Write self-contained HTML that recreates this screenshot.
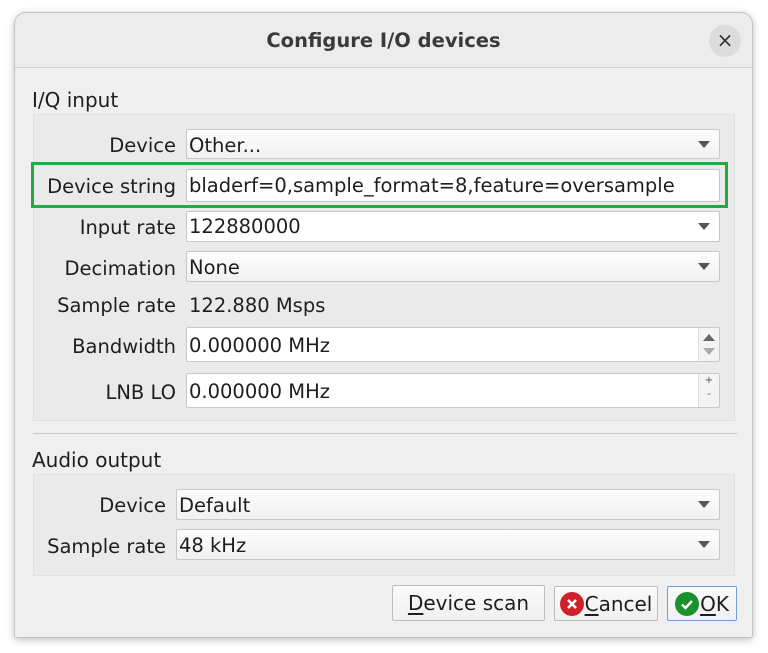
<!DOCTYPE html>
<html><head><style>
body{margin:0;width:768px;height:653px;background:#fff;position:relative;overflow:hidden;font-family:"DejaVu Sans","Liberation Sans",sans-serif;color:#1e1e1e}
.a{position:absolute}
.dlg{left:14px;top:12px;width:739px;height:626px;background:#efefef;border:1px solid #c4c4c4;border-radius:12px 12px 3px 3px;box-shadow:0 2px 8px rgba(0,0,0,.25);box-sizing:border-box;overflow:hidden}
.tb{left:0;top:0;width:100%;height:54px;border-bottom:1px solid #d0d0d0;background:#ececec}
.lbl{font-size:19.5px;text-align:right;white-space:nowrap}
.fld{background:#fff;border:1px solid #c8c8c8;border-radius:2px;box-sizing:border-box;font-size:19.5px;padding-left:2px;line-height:32px;white-space:nowrap;overflow:hidden}
.cmb{background:linear-gradient(#fdfdfd,#f1f1f1);border:1px solid #c8c8c8;border-radius:2px;box-sizing:border-box;font-size:19.5px;padding-left:2px;line-height:31px;white-space:nowrap}
.arr{position:absolute;right:9px;top:11px;width:0;height:0;border-left:6px solid transparent;border-right:6px solid transparent;border-top:7px solid #555}
.grp{border:1px solid #e0e0e0;background:#eaeaea;box-sizing:border-box}
.btn{background:linear-gradient(#fafafa,#f0f0f0);border:1px solid #bdbdbd;border-radius:2px;box-sizing:border-box;font-size:20px;height:35px;display:flex;align-items:center;justify-content:center;gap:1px}
u{text-decoration:underline;text-underline-offset:3px}
.ic{display:inline-block;width:24px;height:24px;border-radius:50%;position:relative;flex:none}
</style></head><body>
<div class="a dlg">
 <div class="a tb"></div>
 <div class="a" style="left:0;top:16px;width:100%;text-align:center;font-size:19.5px;font-weight:bold;color:#3a3a3a">Configure I/O devices</div>
 <div class="a" style="left:694px;top:12px;width:32px;height:32px;border-radius:50%;background:#dcdcdc;text-align:center;line-height:31px;font-size:20px;color:#333">×</div>
</div>
<div class="a" style="left:32px;top:88px;font-size:20px">I/Q input</div>
<div class="a grp" style="left:33px;top:114px;width:702px;height:307px"></div>
<div class="a lbl" style="left:20px;top:134px;width:156px">Device</div>
<div class="a cmb" style="left:186px;top:129px;width:534px;height:30px">Other...<div class="arr"></div></div>
<div class="a" style="left:31px;top:162px;width:697px;height:46px;border:3px solid #27a844;box-sizing:border-box"></div>
<div class="a lbl" style="left:20px;top:175px;width:156px">Device string</div>
<div class="a fld" style="left:186px;top:169px;width:534px;height:33px">bladerf=0,sample_format=8,feature=oversample</div>
<div class="a lbl" style="left:20px;top:216px;width:156px">Input rate</div>
<div class="a fld" style="left:186px;top:211px;width:534px;height:31px;line-height:30px">122880000<div class="arr" style="top:11px"></div></div>
<div class="a lbl" style="left:20px;top:257px;width:156px">Decimation</div>
<div class="a cmb" style="left:186px;top:251px;width:534px;height:31px">None<div class="arr"></div></div>
<div class="a lbl" style="left:20px;top:294px;width:156px">Sample rate</div>
<div class="a" style="left:189px;top:294px;font-size:19.5px">122.880 Msps</div>
<div class="a lbl" style="left:20px;top:335px;width:156px">Bandwidth</div>
<div class="a fld" style="left:186px;top:327px;width:534px;height:35px;line-height:35px">0.000000 MHz<div class="a" style="right:0;top:0;width:20px;height:33px;background:#f3f3f3;border-left:1px solid #ddd"><div class="a" style="left:4px;top:6px;border-left:6px solid transparent;border-right:6px solid transparent;border-bottom:7px solid #666"></div><div class="a" style="left:4px;top:20px;border-left:6px solid transparent;border-right:6px solid transparent;border-top:7px solid #aaa"></div></div></div>
<div class="a lbl" style="left:20px;top:381px;width:156px">LNB LO</div>
<div class="a fld" style="left:186px;top:373px;width:534px;height:35px;line-height:35px">0.000000 MHz<div class="a" style="right:0;top:0;width:20px;height:33px;background:#f3f3f3;border-left:1px solid #ddd;font-size:10px;line-height:14px;text-align:center;color:#555">+<br>-</div></div>
<div class="a" style="left:33px;top:433px;width:704px;height:1px;background:#c8c8c8"></div>
<div class="a" style="left:32px;top:448px;font-size:20px">Audio output</div>
<div class="a grp" style="left:33px;top:474px;width:702px;height:102px"></div>
<div class="a lbl" style="left:10px;top:494px;width:156px">Device</div>
<div class="a cmb" style="left:176px;top:489px;width:544px;height:31px">Default<div class="arr"></div></div>
<div class="a lbl" style="left:10px;top:535px;width:156px">Sample rate</div>
<div class="a cmb" style="left:176px;top:529px;width:544px;height:31px">48 kHz<div class="arr"></div></div>
<div class="a btn" style="left:392px;top:585px;width:153px;height:36px"><span><u>D</u>evice scan</span></div>
<div class="a btn" style="left:554px;top:586px;width:104px"><span class="ic" style="background:#d0202e"><svg width="24" height="24" style="position:absolute;left:0;top:0"><path d="M8 8l8 8M16 8l-8 8" stroke="#fff" stroke-width="2.6" fill="none"/></svg></span><span><u>C</u>ancel</span></div>
<div class="a btn" style="left:667px;top:586px;width:70px;border-color:#6f9ed0"><span class="ic" style="background:#1c8f2e"><svg width="24" height="24" style="position:absolute;left:0;top:0"><path d="M7 12.5l3.5 3.5 6.5-7" stroke="#fff" stroke-width="2.4" fill="none"/></svg></span><span><u>O</u>K</span></div>
</body></html>
